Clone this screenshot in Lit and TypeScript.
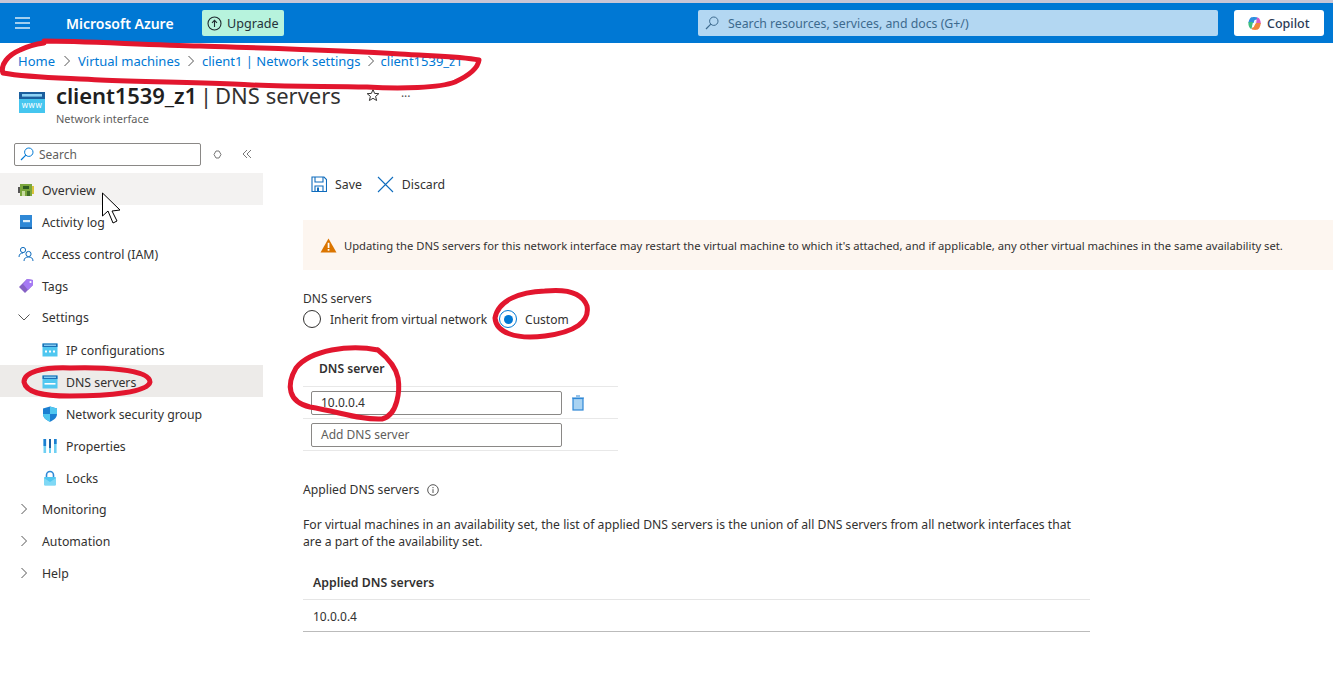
import { LitElement, html, css, svg } from "lit";
import { customElement } from "lit/decorators.js";

const serverIcon = (dots: boolean) => svg`<svg width="16" height="16" viewBox="0 0 16 16"><rect x="0.5" y="1.5" width="15" height="13" fill="#50c7f0"/><rect x="0.5" y="1.5" width="15" height="3.5" fill="#1b6fb5"/><rect x="2" y="2.6" width="12" height="1.3" fill="#8fd4f5"/>${dots ? svg`<rect x="3" y="8.5" width="2" height="2" fill="#fff"/><rect x="7" y="8.5" width="2" height="2" fill="#fff"/><rect x="11" y="8.5" width="2" height="2" fill="#fff"/>` : svg`<rect x="2.5" y="9" width="11" height="1.6" fill="#fff"/>`}</svg>`;

const chevRight = svg`<svg width="12" height="12" viewBox="0 0 12 12"><path d="M3.5 1 L8.5 6 L3.5 11" fill="none" stroke="#555" stroke-width="1"/></svg>`;
const chevDown = svg`<svg width="12" height="12" viewBox="0 0 12 12"><path d="M0.5 3.5 L6 9 L11.5 3.5" fill="none" stroke="#555" stroke-width="1"/></svg>`;
const lens = (c: string, s = 14) => svg`<svg width="${s}" height="${s}" viewBox="0 0 14 14"><circle cx="8.8" cy="5.2" r="4.2" fill="none" stroke="${c}" stroke-width="1"/><path d="M5.8 8.2 L1 13" stroke="${c}" stroke-width="1.2" fill="none"/></svg>`;

@customElement("app-root")
export class AppRoot extends LitElement {
  static styles = css`
    :host { display: block; position: relative; width: 1333px; height: 690px; overflow: hidden; background: #fff; color: #323130;
      font-family: "Noto Sans", "Open Sans", sans-serif; font-size: 12px; }
    * { box-sizing: border-box; }
    .edge { height: 3px; background: #c9c6d6; }
    .top { height: 40px; background: #0078d4; display: flex; align-items: center; }
    .burger { width: 15px; margin-left: 15px; display: flex; flex-direction: column; gap: 3px; }
    .burger i { display: block; height: 2px; background: #a3cfef; }
    .brand { margin-left: 36px; width: 136px; color: #fff; font-size: 14px; font-weight: 600; }
    .upgrade { width: 82px; height: 26px; background: #b7f3dd; border-radius: 2px; display: flex; align-items: center; gap: 5px; padding-left: 5px; color: #25323a; font-size: 12.6px; }
    .search { margin-left: 414px; width: 520px; height: 26px; background: #b3d7f2; border-radius: 2px; display: flex; align-items: center; gap: 9px; padding-left: 7px; color: #3d6a8e; font-size: 12.3px; }
    .copilot { margin-left: 16px; width: 90px; height: 26px; background: #fff; border-radius: 3px; display: flex; align-items: center; gap: 5px; padding-left: 13px; color: #2b3a55; font-size: 12.5px; font-weight: 500; }
    .crumbs { height: 37px; display: flex; align-items: center; padding: 0 0 2px 18px; color: #0078d4; font-size: 13px; }
    .crumbs a { display: block; }
    .crumbs .sep { display: flex; width: 22px; justify-content: center; }
    .crumbs .sep.wide { width: 23px; }
    .crumbs .sep.tight { width: 20px; }
    .title { height: 46px; display: flex; padding-left: 19px; }
    .title .ico { margin-top: 12px; width: 26px; height: 21px; }
    .title .txt { margin-left: 11px; }
    .title h1 { margin: 0; font-size: 22px; font-weight: 400; line-height: 30px; color: #323130; white-space: nowrap; display: flex; }
    .title h1 b { font-weight: 600; color: #1f1f1f; letter-spacing: -0.1px; }
    .title h1 .bar { margin: 0 3px; }
    .title p { margin: 0; font-size: 11px; line-height: 16px; color: #605e5c; margin-top: 1px; }
    .title .star { margin-left: 25px; margin-top: 8px; }
    .title .more { margin-left: 21px; margin-top: 8px; color: #555; font-size: 12px; }
    .body { display: grid; grid-template-columns: 263px 1fr; }
    .side { padding-top: 16px; }
    .sbar { display: flex; align-items: center; padding-left: 14px; height: 24px; margin-bottom: 7px; }
    .sinput { width: 187px; height: 23px; border: 1px solid #8a8886; border-radius: 2px; display: flex; align-items: center; gap: 5px; padding-left: 5px; color: #605e5c; font-size: 12px; }
    .sbar .dia { margin-left: 12px; width: 12px; }
    .sbar .col { margin-left: 17px; color: #777; font-size: 13px; }
    .row { height: 32px; display: flex; align-items: center; font-size: 12.3px; padding: 2px 0 0 18px; gap: 8px; white-space: nowrap; }
    .row.sel { background: #f3f2f1; }
    .row.sel2 { background: #edebe9; }
    .row.sub { padding-left: 42px; }
    .row.parent { gap: 12px; }
    .row.up { padding-top: 0; }
    .row.first { margin-top: -1px; }
    .row svg { flex: none; }
    .main { padding-left: 40px; padding-top: 40px; }
    .cmd { height: 36px; display: flex; align-items: center; font-size: 12.3px; }
    .cmd .it { display: flex; align-items: center; gap: 8px; margin-left: 8px; }
    .cmd .it + .it { margin-left: 15px; }
    .warn { margin-top: 18px; height: 50px; background: #fdf6f0; display: flex; align-items: center; padding-left: 17px; gap: 7px; font-size: 11.23px; white-space: nowrap; }
    .lbl { margin-top: 20px; font-size: 12px; line-height: 17px; }
    .radios { display: flex; align-items: center; height: 24px; font-size: 12px; }
    .radio { width: 18px; height: 18px; border-radius: 50%; border: 1px solid #323130; display: flex; align-items: center; justify-content: center; margin-right: 9px; }
    .radio.on { border-color: #0078d4; margin-right: 8px; }
    .radio.on i { width: 9px; height: 9px; border-radius: 50%; background: #0078d4; display: block; }
    .grp { display: flex; align-items: center; }
    .grp + .grp { margin-left: 12px; }
    .tbl { width: 315px; margin-top: 20px; }
    .th { height: 36px; display: flex; align-items: center; padding-left: 16px; font-weight: 600; font-size: 12.1px; border-bottom: 1px solid #e8e8e8; }
    .tr { height: 32px; display: flex; align-items: center; padding-left: 8px; border-bottom: 1px solid #e8e8e8; }
    .inp { width: 251px; height: 24px; border: 1px solid #8a8886; border-radius: 2px; display: flex; align-items: center; padding-left: 9px; font-size: 12px; }
    .inp.ph { color: #605e5c; }
    .tr svg { margin-left: 9px; }
    .applied { margin-top: 30px; display: flex; align-items: center; gap: 8px; font-size: 12.2px; line-height: 17px; }
    .para { margin: 18px 0 0; width: 780px; font-size: 12.2px; line-height: 17px; }
    .tbl2 { width: 787px; margin-top: 16px; }
    .tbl2 .h { height: 34px; display: flex; align-items: center; padding-left: 10px; font-weight: 600; font-size: 12.3px; border-bottom: 1px solid #e5e5e5; }
    .tbl2 .c { height: 32px; display: flex; align-items: center; padding: 2px 0 0 10px; font-size: 12px; border-bottom: 1px solid #bbb; }
    .ink { position: absolute; left: 0; top: 0; pointer-events: none; }
  `;

  render() {
    const row = (icon: unknown, label: string, cls = "") => html`<div class="row ${cls}">${icon}<span>${label}</span></div>`;
    return html`
      <div class="edge"></div>
      <header class="top">
        <div class="burger"><i></i><i></i><i></i></div>
        <div class="brand">Microsoft Azure</div>
        <div class="upgrade">
          <svg width="15" height="15" viewBox="0 0 15 15"><circle cx="7.5" cy="7.5" r="6.5" fill="none" stroke="#1f2a30" stroke-width="1.1"/><path d="M7.5 11 V4.5 M5 6.8 L7.5 4.3 L10 6.8" fill="none" stroke="#1f2a30" stroke-width="1.1"/></svg>
          <span>Upgrade</span>
        </div>
        <div class="search">${lens("#3d6a8e")}<span>Search resources, services, and docs (G+/)</span></div>
        <div class="copilot">
          <svg width="15" height="15" viewBox="0 0 15 15"><path d="M4 1.5 C5 0.8 9 0.8 10.5 1.5 L8 7 H1.5 C1.5 5 2.5 2.5 4 1.5 Z" fill="#2f8fe0"/><path d="M1.5 6 H6 L4.5 13 C2.5 12.5 1 9.5 1.5 6 Z" fill="#3fbf7f"/><path d="M10 1.5 C12.5 1.5 14 5 13.7 8 L9 8 Z" fill="#d65ac8"/><path d="M9 7 H13.7 C13.5 10.5 12 13.5 10 13.8 C8 14 5.5 14 4.5 13 Z" fill="#f0843c"/><path d="M8.3 4.5 L6.2 10.5" stroke="#fff" stroke-width="1.6" stroke-linecap="round"/></svg>
          <span>Copilot</span>
        </div>
      </header>
      <nav class="crumbs">
        <a>Home</a><span class="sep wide">${chevRight}</span>
        <a>Virtual machines</a><span class="sep">${chevRight}</span>
        <a>client1 | Network settings</a><span class="sep tight">${chevRight}</span>
        <a>client1539_z1</a>
      </nav>
      <div class="title">
        <div class="ico"><svg width="26" height="21" viewBox="0 0 26 21"><rect width="26" height="21" fill="#45c6ef"/><rect width="26" height="7" fill="#1b5f9e"/><rect x="3" y="2" width="20" height="2.6" fill="#8fd4f5"/><text x="13" y="16" text-anchor="middle" font-size="8" font-family="Noto Sans" fill="#fff" letter-spacing=".5">www</text></svg></div>
        <div class="txt">
          <h1><b>client1539_z1</b><span class="bar">|</span><span>DNS servers</span></h1>
          <p>Network interface</p>
        </div>
        <div class="star"><svg width="14" height="14" viewBox="0 0 14 14"><path d="M7 1.5 L8.6 5.4 L12.8 5.7 L9.6 8.4 L10.6 12.5 L7 10.3 L3.4 12.5 L4.4 8.4 L1.2 5.7 L5.4 5.4 Z" fill="none" stroke="#323130" stroke-width="1"/></svg></div>
        <div class="more">···</div>
      </div>
      <div class="body">
        <aside class="side">
          <div class="sbar">
            <div class="sinput">${lens("#0078d4")}<span>Search</span></div>
            <div class="dia"><svg width="9" height="9" viewBox="0 0 9 9"><path d="M3 1 H6 L8 4.5 L6 8 H3 L1 4.5 Z" fill="none" stroke="#777"/></svg></div>
            <div class="col"><svg width="10" height="10" viewBox="0 0 10 10"><path d="M5 1 L1 5 L5 9 M9 1 L5 5 L9 9" fill="none" stroke="#777"/></svg></div>
          </div>
          ${row(svg`<svg width="16" height="16" viewBox="0 0 16 16"><rect x="2" y="2" width="12" height="12" fill="#7aa63c"/><rect x="0" y="5" width="2" height="6" fill="#555"/><rect x="14" y="4" width="2" height="8" fill="#d9c33c"/><rect x="5" y="4" width="6" height="3" fill="#2d5a20"/><rect x="4" y="9" width="3" height="5" fill="#c8dca0"/><rect x="9" y="9" width="3" height="5" fill="#3f6d25"/></svg>`, "Overview", "sel")}
          ${row(svg`<svg width="16" height="16" viewBox="0 0 16 16"><rect x="2" y="1" width="12" height="14" fill="#2f88d6"/><rect x="2" y="13" width="12" height="2" fill="#1b62a8"/><rect x="5" y="6" width="7" height="2.2" fill="#dff0fb"/></svg>`, "Activity log")}
          ${row(svg`<svg width="16" height="16" viewBox="0 0 16 16" fill="none" stroke="#0f6cbd" stroke-width="1"><circle cx="5" cy="4" r="2.6"/><path d="M1 11 C1 8 3 7 5 7"/><circle cx="10.5" cy="8" r="2.6"/><path d="M6 15 C6 12 8 11 10.5 11 C13 11 15 12 15 15"/></svg>`, "Access control (IAM)")}
          ${row(svg`<svg width="16" height="16" viewBox="0 0 16 16"><path d="M9 1 L15 2 L15 7 L7 15 L1 9 Z" fill="#8661c5"/><path d="M9 1 L15 2 L15 7 L10 12 L5 6 Z" fill="#a67af4"/><circle cx="12.5" cy="4" r="1.1" fill="#fff"/></svg>`, "Tags")}
          ${row(chevDown, "Settings", "parent up")}
          <div class="row sub">${serverIcon(true)}<span>IP configurations</span></div>
          <div class="row sub sel2">${serverIcon(false)}<span>DNS servers</span></div>
          ${row(svg`<svg width="16" height="16" viewBox="0 0 16 16"><path d="M8 0.5 L15 2.5 V8 C15 12 11 14.5 8 15.8 C5 14.5 1 12 1 8 V2.5 Z" fill="#1b7fd1"/><path d="M8 0.5 L15 2.5 V8 H8 Z" fill="#50c7f0"/><path d="M8 8 H1 C1 12 5 14.5 8 15.8 Z" fill="#50c7f0"/></svg>`, "Network security group", "sub")}
          ${row(svg`<svg width="16" height="16" viewBox="0 0 16 16"><rect x="1.5" y="1" width="2.6" height="14" fill="#6fd0f3"/><rect x="1.5" y="1" width="2.6" height="7" fill="#1b7fd1"/><rect x="7" y="1" width="2" height="14" fill="#6fd0f3"/><rect x="7" y="1" width="2" height="9" fill="#1b5f9e"/><rect x="12" y="1" width="2.6" height="14" fill="#6fd0f3"/><rect x="12" y="1" width="2.6" height="5" fill="#1b7fd1"/></svg>`, "Properties", "sub")}
          ${row(svg`<svg width="16" height="16" viewBox="0 0 16 16"><path d="M4.5 8 V5 A3.5 3.5 0 0 1 11.5 5 V8" fill="none" stroke="#2f88d6" stroke-width="1.6"/><rect x="2" y="7" width="12" height="8.5" rx="1" fill="#50c7f0"/><path d="M2 8 L8 12 L14 8 V15 H2 Z" fill="#7fd8f5"/></svg>`, "Locks", "sub")}
          ${row(chevRight, "Monitoring", "parent first")}
          ${row(chevRight, "Automation", "parent")}
          ${row(chevRight, "Help", "parent")}
        </aside>
        <main class="main">
          <div class="cmd">
            <div class="it"><svg width="16" height="16" viewBox="0 0 16 16" fill="none" stroke="#0f6cbd" stroke-width="1.1"><path d="M1 1 H13 L15.5 3.5 V15.5 H1 Z"/><path d="M4 1 V6 H12 V1"/><path d="M4 15.5 V10 H12 V15.5"/><rect x="6" y="11.5" width="2" height="4" fill="#0f6cbd" stroke="none"/></svg><span>Save</span></div>
            <div class="it"><svg width="17" height="17" viewBox="0 0 17 17"><path d="M1 1 L16 16 M16 1 L1 16" stroke="#0f6cbd" stroke-width="1.1" fill="none"/></svg><span>Discard</span></div>
          </div>
          <div class="warn">
            <svg width="17" height="15" viewBox="0 0 17 15"><path d="M8.5 0.5 L16.5 14.5 H0.5 Z" fill="#db7500"/><rect x="7.7" y="4.8" width="1.7" height="5.2" fill="#fff"/><rect x="7.7" y="11" width="1.7" height="1.7" fill="#fff"/></svg>
            <span>Updating the DNS servers for this network interface may restart the virtual machine to which it's attached, and if applicable, any other virtual machines in the same availability set.</span>
          </div>
          <div class="lbl">DNS servers</div>
          <div class="radios">
            <div class="grp"><span class="radio"></span><span>Inherit from virtual network</span></div>
            <div class="grp"><span class="radio on"><i></i></span><span>Custom</span></div>
          </div>
          <div class="tbl">
            <div class="th">DNS server</div>
            <div class="tr"><div class="inp">10.0.0.4</div>
              <svg width="14" height="16" viewBox="0 0 14 16" fill="none"><path d="M5 1 H9 M1 3 H13" stroke="#2f88d6" stroke-width="1.2"/><rect x="2" y="3.5" width="10" height="11.5" fill="#a9d3f2" stroke="#2f88d6" stroke-width="1.2"/></svg>
            </div>
            <div class="tr"><div class="inp ph">Add DNS server</div></div>
          </div>
          <div class="applied"><span>Applied DNS servers</span>
            <svg width="12" height="12" viewBox="0 0 12 12" fill="none"><circle cx="6" cy="6" r="5.3" stroke="#555"/><path d="M6 5.2 V9 M6 3 V4.2" stroke="#555"/></svg>
          </div>
          <p class="para">For virtual machines in an availability set, the list of applied DNS servers is the union of all DNS servers from all network interfaces that are a part of the availability set.</p>
          <div class="tbl2">
            <div class="h">Applied DNS servers</div>
            <div class="c">10.0.0.4</div>
          </div>
        </main>
      </div>
      <svg class="ink" width="1333" height="690" viewBox="0 0 1333 690" fill="none" stroke="#e2162e" stroke-width="5" stroke-linecap="round" stroke-linejoin="round">
        <path d="M44 41 C80 41 150 45 200 46 C260 48 340 50 400 54 C430 56 460 56 479 60 C478 68 470 75 455 82 C440 88 400 89 367 87 C320 86 280 87 233 84 C180 82 140 82 100 80 C70 78 30 78 3 73 C0 65 8 55 20 50 C28 46 36 44 44 43"/>
        <path d="M24 382 C24 372 42 367 70 368 C100 367 150 369 150 382 C148 392 110 396 70 396 C40 396 26 392 24 382 Z"/>
        <path d="M378 350 C350 344 310 350 296 368 C286 385 288 402 310 407 C340 412 360 420 382 419 C398 415 400 390 398 378 C396 368 388 358 378 350"/>
        <path d="M545 291 C520 292 498 300 495 318 C496 332 515 340 545 336 C575 332 590 322 587 306 C582 292 565 289 545 291"/>
      </svg>
      <svg class="ink" width="1333" height="690" viewBox="0 0 1333 690"><path d="M102.5 193 V216 L108 211 L113 223 L117 221 L112 211 L120 210 Z" fill="#fff" stroke="#000" stroke-width="1"/></svg>
    `;
  }
}
